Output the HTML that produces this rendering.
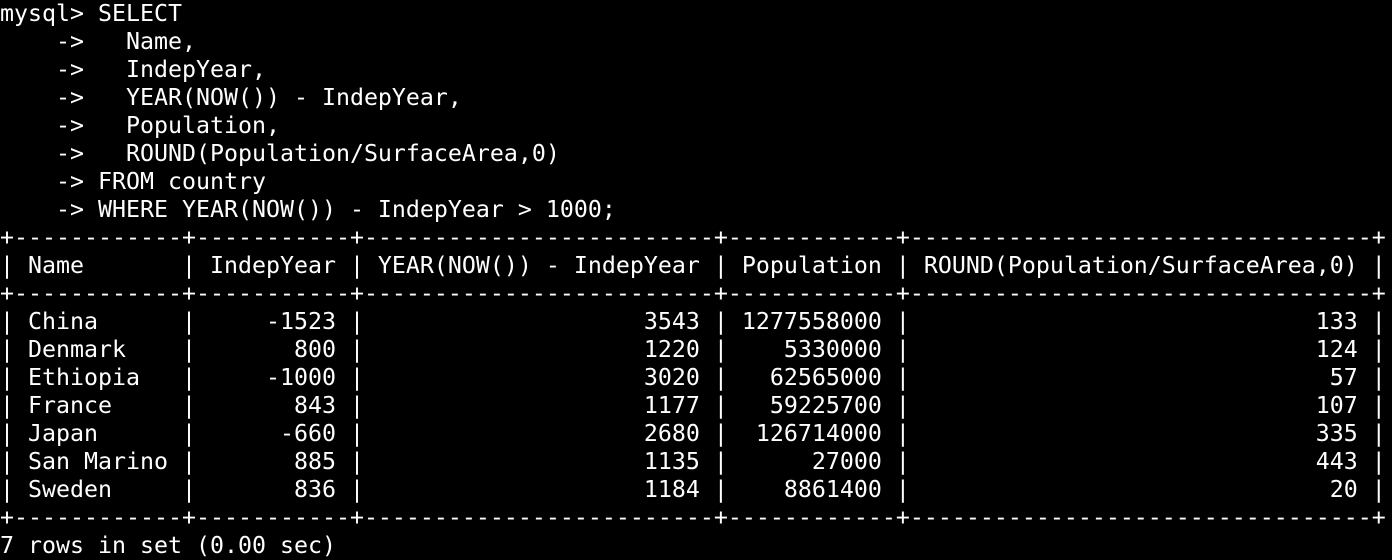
<!DOCTYPE html>
<html><head><meta charset="utf-8"><style>
html,body{margin:0;padding:0;background:#000;width:1392px;height:560px;overflow:hidden}
pre{margin:0;padding:0;color:#fff;font-family:"DejaVu Sans Mono","Liberation Mono",monospace;font-size:23.25px;line-height:28px;white-space:pre}
</style></head><body><pre>mysql&gt; SELECT
    -&gt;   Name,
    -&gt;   IndepYear,
    -&gt;   YEAR(NOW()) - IndepYear,
    -&gt;   Population,
    -&gt;   ROUND(Population/SurfaceArea,0)
    -&gt; FROM country
    -&gt; WHERE YEAR(NOW()) - IndepYear &gt; 1000;
+------------+-----------+-------------------------+------------+---------------------------------+
| Name       | IndepYear | YEAR(NOW()) - IndepYear | Population | ROUND(Population/SurfaceArea,0) |
+------------+-----------+-------------------------+------------+---------------------------------+
| China      |     -1523 |                    3543 | 1277558000 |                             133 |
| Denmark    |       800 |                    1220 |    5330000 |                             124 |
| Ethiopia   |     -1000 |                    3020 |   62565000 |                              57 |
| France     |       843 |                    1177 |   59225700 |                             107 |
| Japan      |      -660 |                    2680 |  126714000 |                             335 |
| San Marino |       885 |                    1135 |      27000 |                             443 |
| Sweden     |       836 |                    1184 |    8861400 |                              20 |
+------------+-----------+-------------------------+------------+---------------------------------+
7 rows in set (0.00 sec)</pre></body></html>
